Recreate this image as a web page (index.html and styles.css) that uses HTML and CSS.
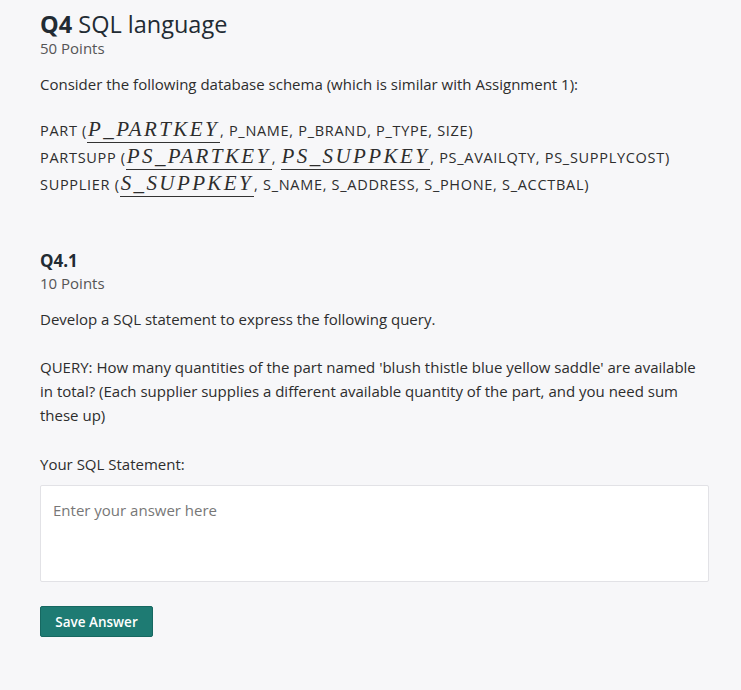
FILE: index.html
```html
<!DOCTYPE html>
<html>
<head>
<meta charset="utf-8">
<link rel="stylesheet" href="styles.css">
</head>
<body>
<main class="page">
  <section class="question">
    <h1 class="q-title"><strong>Q4</strong> SQL language</h1>
    <div class="points">50 Points</div>
    <p class="text intro">Consider the following database schema (which is similar with Assignment 1):</p>
    <div class="schema">
      <div class="schema-line">PART (<span class="key">P_PARTKEY</span>, P_NAME, P_BRAND, P_TYPE, SIZE)</div>
      <div class="schema-line">PARTSUPP (<span class="key">PS_PARTKEY</span>, <span class="key">PS_SUPPKEY</span>, PS_AVAILQTY, PS_SUPPLYCOST)</div>
      <div class="schema-line">SUPPLIER (<span class="key">S_SUPPKEY</span>, S_NAME, S_ADDRESS, S_PHONE, S_ACCTBAL)</div>
    </div>
  </section>
  <section class="subquestion">
    <h2 class="sq-title">Q4.1</h2>
    <div class="points">10 Points</div>
    <p class="text develop">Develop a SQL statement to express the following query.</p>
    <p class="text query">QUERY: How many quantities of the part named 'blush thistle blue yellow saddle' are available in total? (Each supplier supplies a different available quantity of the part, and you need sum these up)</p>
    <label class="text label">Your SQL Statement:</label>
    <textarea class="answer" placeholder="Enter your answer here"></textarea>
    <button class="save">Save Answer</button>
  </section>
</main>
</body>
</html>
```
FILE: styles.css
```css
html, body {
  margin: 0;
  padding: 0;
  background: #f7f7f9;
}
body {
  font-family: "Open Sans", "Liberation Sans", sans-serif;
  color: #333;
}
.page {
  padding: 10px 32px 40px 40px;
}
.q-title {
  margin: 0;
  font-size: 23.5px;
  font-weight: 400;
  line-height: 28px;
  color: #222b33;
}
.q-title strong {
  font-weight: 700;
}
.points {
  font-size: 15px;
  line-height: 20px;
  color: #555;
}
.text {
  font-size: 15px;
  line-height: 24px;
  color: #2d2d2d;
  margin: 0;
}
.intro {
  margin-top: 14px;
}
.schema {
  margin-top: 21px;
  font-size: 14.5px;
  letter-spacing: 0.7px;
  color: #2d2d2d;
}
.schema-line {
  line-height: 27px;
  height: 27px;
}
.key {
  font-family: "Liberation Serif", serif;
  font-style: italic;
  font-size: 21px;
  letter-spacing: 2.4px;
  display: inline-block;
  border-bottom: 1px solid #333;
  line-height: 25px;
  padding: 0 1px;
}
.subquestion {
  margin-top: 51px;
}
.sq-title {
  margin: 0;
  font-size: 17px;
  font-weight: 700;
  line-height: 24px;
  color: #222b33;
}
.develop {
  margin-top: 14px;
}
.query {
  margin-top: 24px;
}
.label {
  display: block;
  margin-top: 25px;
}
.answer {
  display: block;
  box-sizing: border-box;
  width: 669px;
  height: 97px;
  margin-top: 9px;
  padding: 14px 12px;
  border: 1px solid #e2e2e6;
  border-radius: 2px;
  background: #fff;
  font-family: "Open Sans", "Liberation Sans", sans-serif;
  font-size: 15px;
  resize: none;
}
.answer::placeholder {
  color: #777;
}
.save {
  display: block;
  margin-top: 24px;
  width: 113px;
  height: 31px;
  border: 1px solid #176861;
  border-radius: 2px;
  background: #1e7b73;
  color: #fff;
  font-family: "Open Sans", "Liberation Sans", sans-serif;
  font-size: 13.5px;
  font-weight: 600;
  padding: 0;
}
```
